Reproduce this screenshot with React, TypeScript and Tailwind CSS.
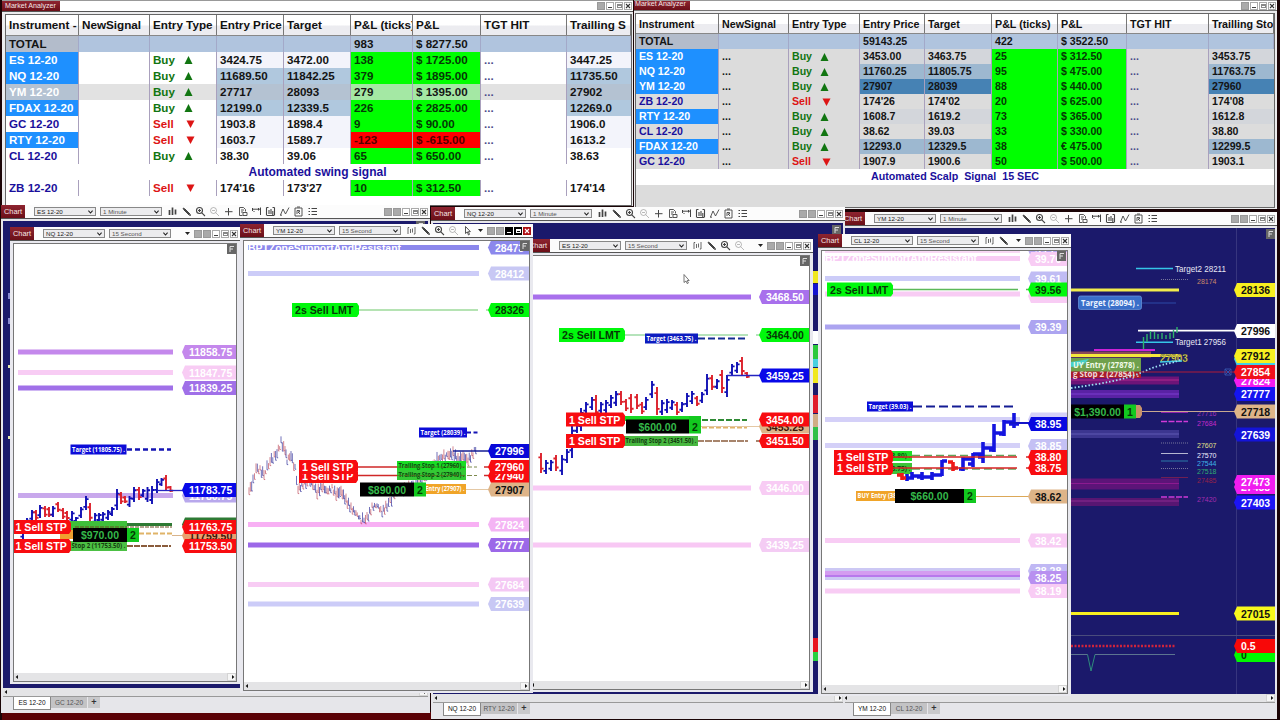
import type { ReactNode } from "react";
import clsx from "clsx";

type Row = {
  name: string;
  side?: "Buy" | "Sell";
  cells: [string, string, string, string, string];
  tone?: "plain" | "light" | "blue" | "deep";
  marked?: boolean;
  loss?: boolean;
  dimmed?: boolean;
};

const swingRows: Row[] = [
  { name: "ES 12-20", side: "Buy", cells: ["3424.75", "3472.00", "138", "$ 1725.00", "3447.25"], tone: "light", marked: true },
  { name: "NQ 12-20", side: "Buy", cells: ["11689.50", "11842.25", "379", "$ 1895.00", "11735.50"], tone: "blue", marked: true },
  { name: "YM 12-20", side: "Buy", cells: ["27717", "28093", "279", "$ 1395.00", "27902"], tone: "deep", dimmed: true },
  { name: "FDAX 12-20", side: "Buy", cells: ["12199.0", "12339.5", "226", "€ 2825.00", "12269.0"], tone: "blue", marked: true },
  { name: "GC 12-20", side: "Sell", cells: ["1903.8", "1898.4", "9", "$ 90.00", "1906.0"], tone: "light" },
  { name: "RTY 12-20", side: "Sell", cells: ["1603.7", "1589.7", "-123", "$ -615.00", "1613.2"], tone: "light", marked: true, loss: true },
  { name: "CL 12-20", side: "Buy", cells: ["38.30", "39.06", "65", "$ 650.00", "38.63"] },
];

const swingTail: Row[] = [
  { name: "ZB 12-20", side: "Sell", cells: ["174'16", "173'27", "10", "$ 312.50", "174'14"] },
];

const scalpRows: Row[] = [
  { name: "ES 12-20", side: "Buy", cells: ["3453.00", "3463.75", "25", "$ 312.50", "3453.75"], tone: "light", marked: true },
  { name: "NQ 12-20", side: "Buy", cells: ["11760.25", "11805.75", "95", "$ 475.00", "11763.75"], tone: "blue", marked: true },
  { name: "YM 12-20", side: "Buy", cells: ["27907", "28039", "88", "$ 440.00", "27960"], tone: "deep", marked: true },
  { name: "ZB 12-20", side: "Sell", cells: ["174'26", "174'02", "20", "$ 625.00", "174'08"] },
  { name: "RTY 12-20", side: "Buy", cells: ["1608.7", "1619.2", "73", "$ 365.00", "1612.8"], tone: "light", marked: true },
  { name: "CL 12-20", side: "Buy", cells: ["38.62", "39.03", "33", "$ 330.00", "38.80"] },
  { name: "FDAX 12-20", side: "Buy", cells: ["12293.0", "12329.5", "38", "€ 475.00", "12299.5"], tone: "blue", marked: true },
  { name: "GC 12-20", side: "Sell", cells: ["1907.9", "1900.6", "50", "$ 500.00", "1903.1"] },
];

const SWING_COLS = "grid grid-cols-[73px_71px_67px_67px_67px_62px_68px_86px_64px]";
const SCALP_COLS = "grid grid-cols-[83px_70px_71px_65px_67px_66px_69px_82px_65px]";

const swingTones = { plain: "bg-white", light: "bg-[#f3f4fb]", blue: "bg-[#b0c8de]", deep: "bg-[#b4c2d2]" };
const scalpTones = { plain: "bg-[#dcdcdc]", light: "bg-[#d3d6db]", blue: "bg-[#9db8d0]", deep: "bg-[#4682b4]" };

function AnalyzerRow({ row, scalp }: { row: Row; scalp?: boolean }) {
  const tone = (scalp ? scalpTones : swingTones)[row.tone ?? "plain"];
  const blank = row.dimmed ? "bg-[#e2e2e2]" : scalp ? "bg-[#dcdcdc]" : "bg-white";
  const pnl = row.loss ? "bg-[#ff0000] text-[#500]" : row.dimmed ? "bg-[#a4e8a4]" : "bg-[#00ff00] text-[#053805]";
  const cell = "border-r border-[#a9a0bd] pl-[3px] whitespace-nowrap overflow-hidden";
  return (
    <div className={clsx(scalp ? SCALP_COLS : SWING_COLS, scalp ? "h-[15px] leading-[15px]" : "h-4 leading-4")}>
      <div
        className={clsx(
          cell,
          row.dimmed ? "bg-[#b4c2d2] text-white" : row.marked ? "bg-[#1e90ff] text-white" : [blank, "text-[#1a0f9c]"],
        )}
      >
        {row.name}
      </div>
      <div className={clsx(cell, blank)}>{scalp ? "..." : ""}</div>
      <div className={clsx(cell, blank, "flex", row.side === "Buy" ? "text-[#117511]" : "text-[#dd1414]")}>
        <span className={scalp ? "w-[28px]" : "w-[31px]"}>{row.side}</span>
        <svg className={clsx("mt-[4px] h-[8px] w-[9px]", row.side === "Sell" && "ml-[2px]")} viewBox="0 0 9 8">
          <path d={row.side === "Buy" ? "M4.5 0 8.5 8H.5z" : "M4.5 8 8.5 .5H.5z"} fill="currentColor" />
        </svg>
      </div>
      <div className={clsx(cell, tone)}>{row.cells[0]}</div>
      <div className={clsx(cell, tone)}>{row.cells[1]}</div>
      <div className={clsx(cell, pnl)}>{row.cells[2]}</div>
      <div className={clsx(cell, pnl)}>{row.cells[3]}</div>
      <div className={clsx(cell, blank, "text-[#4a4a8a]")}>...</div>
      <div className={clsx("overflow-hidden pl-[3px] whitespace-nowrap", tone)}>{row.cells[4]}</div>
    </div>
  );
}

function HeaderRow({ labels, scalp }: { labels: string[]; scalp?: boolean }) {
  return (
    <div
      className={clsx(
        scalp ? SCALP_COLS : SWING_COLS,
        scalp ? "h-5 text-[10.7px] leading-[20px]" : "h-[21px] text-[11.7px] leading-[20px]",
        "border-b border-[#888] bg-linear-to-b from-white from-50% to-[#ececf0] to-55% text-[#111]",
      )}
    >
      {labels.map((l) => (
        <div key={l} className="overflow-hidden border-r border-[#777] pl-[3px] whitespace-nowrap">
          {l}
        </div>
      ))}
    </div>
  );
}

function TotalRow({ values, scalp }: { values: string[]; scalp?: boolean }) {
  return (
    <div className={clsx(scalp ? SCALP_COLS : SWING_COLS, scalp ? "h-[15px] leading-[15px]" : "h-4 leading-4", "bg-[#b0c4de]")}>
      {values.map((v, i) => (
        <div key={i} className={clsx("border-r border-[#a3a9c9] pl-[3px] font-bold whitespace-nowrap", i === 0 && "bg-[#b3bccb]")}>
          {v}
        </div>
      ))}
    </div>
  );
}

function WindowButtons({ active, short }: { active?: boolean; short?: boolean }) {
  const box = "h-[8px] w-[8px] border";
  return (
    <div className="flex shrink-0 items-center gap-px">
      <div className={clsx(box, "border-[#999] bg-[#aaa]")} />
      {!short && <div className={clsx(box, "border-[#999] bg-[#aaa]")} />}
      <div className={clsx(box, "flex items-end justify-center", active ? "border-black bg-black" : "border-[#aaa] bg-white")}>
        <div className={clsx("mb-px h-px w-1", active ? "bg-white" : "bg-[#444]")} />
      </div>
      <div className={clsx(box, "flex items-center justify-center", active ? "border-black bg-black" : "border-[#aaa] bg-white")}>
        <div className={clsx("h-1 w-[5px] border border-t-2", active ? "border-white" : "border-[#888]")} />
      </div>
      <svg className={clsx(box, active ? "border-[#a11] bg-[#b3121c] text-white" : "border-[#aaa] bg-white text-[#333]")} viewBox="0 0 6 6">
        <path d="M1 1l4 4M5 1 1 5" stroke="currentColor" strokeWidth="1.1" />
      </svg>
    </div>
  );
}

const iconPaths: Record<string, ReactNode> = {
  bars: <path d="M2.5 4v5M5.5 1.5v7.5M8.5 3.5v5" strokeWidth="1.7" />,
  range: <path d="M2 2.500v6.500M4.500 4v4M6.500 3.500v4M9 2v7M2 2.500h1.200M7.800 9H9" strokeWidth=".8" />,
  pencil: <path d="M2 2l1 2 5 5 1.5.5L9 8 4 3zM3 3l5.5 5.5" strokeWidth="1" />,
  zoomIn: <path d="M4.5 1.5a3 3 0 100 6 3 3 0 000-6zM3 4.5h3M4.5 3v3M6.8 6.8 10 10" strokeWidth="1.1" />,
  zoomOut: <path d="M4.5 1.5a3 3 0 100 6 3 3 0 000-6zM3 4.5h3M6.8 6.8 10 10" strokeWidth=".9" opacity=".4" />,
  plus: <path d="M5.5 2v7.5M2 5.7h7.5" strokeWidth="1" />,
  page: <path d="M2.5 1.5h4l2 2v2M2.5 1.5v8h3M4 4h3M4 6h2M6 6.5h4v3H6z" strokeWidth=".9" />,
  trader: <path d="M1.5 2v3M1.5 3.2h8M9.5 1.5V9M7.5 2v2.5M3 5v1" strokeWidth="1" />,
  candles: <path d="M1.5 1.5v8M9.5 1.5v8M1.5 1.5h2M7.5 1.5h2M4 4v4M6 3v5M7.8 5v4M2 9.5h7" strokeWidth="1.1" />,
  zigzag: <path d="M1.5 9 4 3l2.5 5L10 1.5M1 9.2h2" strokeWidth=".9" />,
  clip: <path d="M2 2h7v8H2zM4 1h3M4 8V4.5h2.5V6H5l2 2" strokeWidth=".9" />,
  list: <path d="M1.5 2.5h1.5M1.5 5.5h1.5M1.5 8.5h1.5M4.5 2.5H10M4.5 5.5H10M4.5 8.5H10" strokeWidth="1.1" />,
  cursor: <path d="M3.5 1.5v7l1.8-1.6L6.5 10l1-.6L6.4 6.6h2z" strokeWidth=".9" />,
};

function ToolIcon({ name }: { name: string }) {
  return (
    <svg className="mx-[1.5px] h-[11px] w-[11px] shrink-0 text-[#444]" viewBox="0 0 11 11" fill="none" stroke="currentColor">
      {iconPaths[name]}
    </svg>
  );
}

function Combo({ value, muted }: { value: string; muted?: boolean }) {
  return (
    <div className="flex h-[9px] w-[62px] shrink-0 items-center justify-between border border-[#888] bg-[#ececee] px-[2px]">
      <span className={clsx("text-[6.2px] leading-[8px]", muted ? "text-[#555]" : "text-[#222]")}>{value}</span>
      <svg className="h-[4px] w-[5px]" viewBox="0 0 5 4">
        <path d="M.4.7 2.5 3 4.6.7" fill="none" stroke="#222" strokeWidth="1.1" />
      </svg>
    </div>
  );
}

function TitleBar({ symbol, period, icons, menu, active }: { symbol: string; period: string; icons: string[]; menu?: boolean; active?: boolean }) {
  return (
    <div className="flex h-[14px] shrink-0 items-center border-b border-[#555] bg-[#fcfcfc]">
      <div className="h-[13px] w-6 shrink-0 bg-linear-to-b from-[#8e2430] to-[#6b0f18] text-center text-[7.4px] leading-[13px] text-[#f5e6e6]">
        Chart
      </div>
      <div className="ml-[9px] flex gap-1">
        <Combo value={symbol} />
        <Combo value={period} muted />
      </div>
      <div className="ml-[3px] flex">
        {icons.map((name) => (
          <ToolIcon key={name} name={name} />
        ))}
      </div>
      <div className="mr-[2px] ml-auto flex items-center gap-1">
        {menu && (
          <svg className="h-[3px] w-[5px]" viewBox="0 0 5 3">
            <path d="M0 0h5L2.5 3z" fill="#222" />
          </svg>
        )}
        <WindowButtons active={active} />
      </div>
    </div>
  );
}

function ScrollBar() {
  return (
    <div className="flex h-2 shrink-0 items-center justify-between bg-[#e4e4e6] pl-px">
      <svg className="h-1 w-1" viewBox="0 0 4 4">
        <path d="M3 0v4L.6 2z" fill="#111" />
      </svg>
      <div className="flex h-full w-[9px] items-center justify-center border border-[#d4d4d4] bg-[#f6f6f6]">
        <svg className="ml-0.5 h-1 w-1" viewBox="0 0 4 4">
          <path d="M1 0v4l2.4-2z" fill="#111" />
        </svg>
      </div>
    </div>
  );
}

type View = [number, number, number, number];

function Canvas({ view, children }: { view: View; children?: ReactNode }) {
  return (
    <svg
      className="block shrink-0 [font-family:'Liberation_Sans',Arial,sans-serif]"
      width={view[2]}
      height={view[3]}
      viewBox={view.join(" ")}
    >
      {children}
    </svg>
  );
}

const allIcons = ["bars", "pencil", "zoomIn", "zoomOut", "plus", "page", "trader", "candles", "zigzag", "clip", "list"];

function WorkspaceWindow({ place, symbol, tabs, view, children }: { place: string; symbol: string; tabs: [string, string]; view: View; children?: ReactNode }) {
  return (
    <section className={clsx("absolute flex flex-col overflow-hidden bg-[#e6e6ea]", place)}>
      <TitleBar symbol={symbol} period="1 Minute" icons={allIcons} />
      <div className="mx-[2px] mt-[2px] flex min-h-0 flex-1 overflow-hidden bg-[#1b196b]">
        <Canvas view={view}>{children}</Canvas>
      </div>
      <div className="mx-[2px] border-b border-[#999]">
        <ScrollBar />
      </div>
      <div className="flex h-4 shrink-0 pl-3 text-[6.5px] leading-[11px]">
        <div className="h-[13px] w-[38px] border border-t-0 border-[#888] bg-white text-center text-[#111]">{tabs[0]}</div>
        <div className="h-[11px] w-[36px] bg-[#c3c3c5] text-center text-[#555]">{tabs[1]}</div>
        <div className="ml-px h-[11px] w-3 bg-[#c9c9cb] text-center text-[9px] font-bold text-[#333]">+</div>
      </div>
    </section>
  );
}

function ChartWindow({ place, symbol, icons, view, active, children }: { place: string; symbol: string; icons: string[]; view: View; active?: boolean; children?: ReactNode }) {
  return (
    <section className={clsx("absolute flex flex-col overflow-hidden bg-[#e9e9ef]", place)}>
      <TitleBar symbol={symbol} period="15 Second" icons={icons} menu active={active} />
      <div className="mx-[3px] mt-[2px] mb-[2px] flex min-h-0 flex-1 flex-col overflow-hidden border border-[#777] bg-white">
        <Canvas view={view}>{children}</Canvas>
        <ScrollBar />
      </div>
    </section>
  );
}

function PriceTag({ x, y, w, fill, text, fg = "#fff" }: { x: number; y: number; w: number; fill: string; text: string; fg?: string }) {
  return (
    <g>
      <path d={`M${x} ${y}l3-7H${x + w}v14H${x + 3}z`} fill={fill} />
      <text x={x + 7} y={y + 4} fontSize="10.5" fontWeight="bold" fill={fg}>
        {text}
      </text>
    </g>
  );
}

function OrderTag({ x, y, w, fill, text, fg = "#fff" }: { x: number; y: number; w: number; fill: string; text: string; fg?: string }) {
  return (
    <g>
      <path d={`M${x} ${y - 7}H${x + w - 2}l2 3v8l-2 3H${x}z`} fill={fill} />
      <text x={x + (w < 58 ? 1.5 : 3)} y={y + 4} fontSize="10.6" fontWeight="bold" fill={fg}>
        {text}
      </text>
    </g>
  );
}

function Note({ x, y, w, h = 10, fill, text, fg = "#fff" }: { x: number; y: number; w: number; h?: number; fill: string; text: string; fg?: string }) {
  return (
    <g>
      <rect x={x} y={y} width={w} height={h} fill={fill} />
      <text x={x + 1.5} y={y + h / 2 + 2.4} fontSize="6.6" fontWeight="bold" fontFamily="'Open Sans', 'Noto Sans', sans-serif" fill={fg} textLength={w - 3} lengthAdjust="spacingAndGlyphs">
        {text}
      </text>
    </g>
  );
}

function Position({ x, y, w, text, qty }: { x: number; y: number; w: number; text: string; qty: string }) {
  return (
    <g fontSize="10.5" fontWeight="bold" textAnchor="middle">
      <rect x={x} y={y - 7} width={w} height="14" fill="#000" />
      <rect x={x + w} y={y - 7} width="12" height="14" fill="#12c91f" />
      <text x={x + w / 2} y={y + 4} fill="#35b84a">
        {text}
      </text>
      <text x={x + w + 6} y={y + 4} fill="#053805">
        {qty}
      </text>
    </g>
  );
}

function Zone({ x, y, w, fill, h = 5 }: { x: number; y: number; w: number; fill: string; h?: number }) {
  return <rect x={x} y={y - h / 2} width={w} height={h} fill={fill} />;
}

function PanelFlag({ x, y }: { x: number; y: number }) {
  return (
    <g>
      <rect x={x} y={y} width="9" height="10" fill="#666" />
      <path d={`M${x + 3} ${y + 8}V${y + 2.5}h4M${x + 3} ${y + 5}h3`} stroke="#ddd" strokeWidth="1" fill="none" />
    </g>
  );
}

// x, high, low, direction
type Bar = [number, number, number, "b" | "r"];

function Bars({ data, width = 1.9, tick = 2.6 }: { data: Bar[]; width?: number; tick?: number }) {
  return (
    <>
      {data.map(([x, hi, lo, dir]) => {
        const span = (lo - hi) * 0.22;
        const open = dir === "b" ? lo - span : hi + span;
        const close = dir === "b" ? hi + span : lo - span;
        return (
          <path
            key={x}
            d={`M${x} ${hi}V${lo}M${x - tick} ${open}H${x}M${x} ${close}h${tick}`}
            stroke={dir === "b" ? "#1010b4" : "#dc202a"}
            strokeWidth={width}
            fill="none"
          />
        );
      })}
    </>
  );
}

const nqBars: Bar[] = [
  [23, 528, 539, "b"], [27, 518, 530, "b"], [32, 510, 521, "b"], [36, 510, 520, "r"], [40, 505, 518, "b"], [45, 506, 517, "r"],
  [49, 507, 517, "r"], [53, 506, 517, "b"], [58, 502, 512, "r"], [63, 508, 519, "r"], [67, 511, 520, "r"], [72, 511, 522, "b"],
  [76, 517, 522, "b"], [81, 507, 518, "b"], [86, 496, 510, "b"], [90, 503, 522, "r"], [95, 513, 524, "b"], [99, 513, 522, "b"],
  [103, 512, 522, "b"], [108, 510, 520, "b"], [112, 507, 516, "b"], [117, 489, 510, "b"], [121, 492, 504, "r"], [125, 496, 503, "r"],
  [129.5, 496, 507, "b"], [134, 487, 502, "b"], [139, 487, 500, "r"], [143, 489, 497, "b"], [147.5, 487, 502, "b"], [152, 486, 504, "b"],
  [157, 479, 493, "b"], [161.5, 478, 486, "b"], [166, 475, 491, "r"], [170.5, 486, 492, "r"],
];

const esBars: Bar[] = [
  [541, 453, 473, "r"], [546, 460, 474, "b"], [551, 460, 471, "b"], [556, 455, 471, "r"], [562, 455, 475, "b"], [567, 449, 463, "b"],
  [572, 423, 458, "b"], [577, 423, 433, "b"], [581, 408, 431, "b"], [586, 402, 413, "b"], [592, 397, 410, "b"], [596, 395, 417, "r"],
  [601, 402, 413, "b"], [606, 400, 413, "b"], [611, 395, 408, "b"], [616, 391, 406, "b"], [621, 391, 405, "r"], [626, 399, 411, "r"],
  [631, 394, 413, "r"], [637, 394, 409, "r"], [642, 402, 414, "r"], [646, 397, 410, "b"], [652, 381, 398, "b"], [657, 387, 415, "r"],
  [662, 400, 415, "b"], [667, 399, 413, "b"], [672, 400, 410, "b"], [677, 402, 415, "r"], [682, 402, 412, "b"], [687, 393, 407, "b"],
  [692, 391, 404, "b"], [697, 396, 406, "r"], [702, 392, 403, "b"], [707, 374, 395, "b"], [712, 375, 390, "r"], [717, 379, 389, "b"],
  [722, 370, 393, "r"], [727, 375, 397, "b"], [732, 364, 375, "b"], [737, 362, 373, "b"], [742, 357, 375, "r"], [747, 372, 378, "r"],
];

const ymTrail: [number, number][] = [
  [249, 491], [253, 481], [256, 468], [260, 470], [264, 474], [270, 461], [277, 453], [281, 442], [285, 450], [287, 460], [291, 455],
  [295, 469], [298, 489], [303, 484], [310, 480], [317, 492], [322, 486], [327, 491], [332, 488], [336, 494], [341, 491], [346, 500],
  [351, 508], [356, 513], [361, 520], [367, 518], [372, 507], [377, 505], [382, 512], [387, 505], [393, 497], [398, 492], [403, 490],
  [413, 485], [422, 479], [430, 470], [437, 459], [448, 455], [453, 453], [458, 460], [463, 456], [468, 460], [473, 453], [477, 447],
];

function YmBars() {
  const out: ReactNode[] = [];
  for (let i = 0; i < ymTrail.length - 1; i++) {
    const [x0, y0] = ymTrail[i];
    const [x1, y1] = ymTrail[i + 1];
    const n = Math.max(2, Math.round((x1 - x0) / 1.4));
    for (let k = 0; k < n; k++) {
      const t = k / n;
      const x = x0 + (x1 - x0) * t;
      const y = y0 + (y1 - y0) * t + Math.sin(x * 2.7) * 2.4;
      const reach = 1.6 + Math.abs(Math.sin(x * 5.1)) * 3.2;
      out.push(
        <path
          key={`${i}-${k}`}
          d={`M${x} ${y - reach}V${y + reach}h1.2`}
          fill="none"
          stroke={Math.sin(x * 1.3) > -0.1 ? "#34349c" : "#c05060"}
          strokeWidth=".7"
        />,
      );
    }
  }
  return <>{out}</>;
}

const ymLevels: [string, number, string][] = [
  ["28174", 284, "#c98a6a"], ["27716", 416, "#a032b8"], ["27684", 425.5, "#c02ac8"], ["27607", 447.5, "#e3e08a"], ["27570", 458, "#f0f0ff"],
  ["27544", 465.5, "#3fb4e8"], ["27518", 473.5, "#2fae72"], ["27485", 482.5, "#96224a"], ["27420", 501.5, "#a42cae"],
];

function YmMinuteChart() {
  return (
    <>
      <path d="M1236.5 228V695" stroke="#37357e" />
      <path d="M1071 635.5H1276" stroke="#4a4c7c" />
      <PanelFlag x={1266} y={229} />
      <path d="M1136 268.5h37M1136 342.3h37" stroke="#35c6e8" strokeWidth="1.6" />
      <g fontSize="8.2" fill="#e8e8f4">
        <text x="1175" y="271.5" textLength="51" lengthAdjust="spacingAndGlyphs">Target2 28211</text>
        <text x="1175" y="345" textLength="51" lengthAdjust="spacingAndGlyphs">Target1 27956</text>
      </g>
      {ymLevels.map(([t, y, c]) => (
        <text key={t} x="1197" y={y} fontSize="7" fill={c}>
          {t}
        </text>
      ))}
      <path d="M1161 279.5h27M1161 443h27M1161 468.5h27" stroke="#8e8ea8" strokeWidth=".8" strokeDasharray="1 1" />
      <path d="M1161 453.5h27" stroke="#c8c8dc" strokeWidth=".9" />
      <path d="M1161 461h27" stroke="#2f86b0" strokeWidth=".9" />
      <path d="M1161 477.5h27" stroke="#7a2050" strokeWidth=".9" />
      <path d="M1142 303h34" stroke="#2c4aa8" />
      <Zone x={1071} y={290} w={108} h={3} fill="#f2ec4c" />
      <rect x="1078.5" y="296" width="63" height="13.5" rx="2" fill="#3a6fc9" stroke="#6d9be0" strokeWidth=".7" />
      <text x="1081" y="305.5" fontSize="8" fontWeight="bold" fontFamily="'Open Sans', 'Noto Sans', sans-serif" fill="#eef4ff" textLength="58" lengthAdjust="spacingAndGlyphs">
        Target (28094) .
      </text>

      <Zone x={1071} y={380.5} w={108} h={8} fill="#6d1478" />
      <path d="M1071 380h108" stroke="#b0288c" />
      <Zone x={1071} y={394} w={108} h={8} fill="#5a22a4" />
      <path d="M1071 394h108" stroke="#7a3cd0" />
      <Zone x={1071} y={434} w={108} h={8} fill="#3c3690" />
      <path d="M1071 434h108" stroke="#5e58b4" />
      <Zone x={1071} y={484} w={108} h={11} fill="#5c1478" />
      <path d="M1071 483.5h108" stroke="#8c1a90" />
      <Zone x={1071} y={502} w={108} h={8} fill="#571672" />
      <path d="M1071 501h108" stroke="#8c2a90" />

      <path d="M1071 351.5h80v6h-80z" fill="#8a4a58" />
      <Zone x={1094} y={350} w={61} h={2} fill="#cc22d8" />
      <path d="M1138 330.7h98" stroke="#fff" strokeWidth="1.8" />
      <path
        d="M1143.5 337v12M1147 334v8M1150.5 331v8M1154.5 332v7M1158 334v5M1162 333v6M1166 335v4M1170 333v6M1173.5 330v8M1177 327v6"
        stroke="#2fb46c"
        strokeWidth="1.4"
      />
      <rect x="1071" y="371" width="70" height="7" fill="#a81c2c" />
      <text x="1073" y="377" fontSize="8" fontWeight="bold" fontFamily="'Open Sans', 'Noto Sans', sans-serif" fill="#f0dada" textLength="66" lengthAdjust="spacingAndGlyphs">
        g Stop 2 (27854) .
      </text>
      <rect x="1071" y="358" width="70" height="13.5" fill="#6fa04c" />
      <path d="M1071 362l18-3-6 6-12 2z" fill="#48d0c8" />
      <text x="1073" y="368" fontSize="8" fontWeight="bold" fontFamily="'Open Sans', 'Noto Sans', sans-serif" fill="#f2fbe8" textLength="66" lengthAdjust="spacingAndGlyphs">
        UY Entry (27878) .
      </text>
      <Zone x={1071} y={355.5} w={110} h={3} fill="#f4e83c" />
      <text x="1160" y="361.5" fontSize="10" fontWeight="bold" fill="#e8e04a" stroke="#182040" strokeWidth=".3">
        27903
      </text>
      <path d="M1160 362l22-1" stroke="#3cc8e8" strokeWidth="1.6" />
      <path d="M1071 388C1100 384 1125 380 1145 371S1170 365 1182 359" fill="none" stroke="#9fe0f4" strokeWidth="1.8" strokeDasharray="1.5 2" />
      <path d="M1141 372h95" stroke="#b01c38" strokeWidth="1.2" />
      <path d="M1225 369h6v6h-6zM1225 369l6 6M1231 369l-6 6" fill="none" stroke="#3450a8" />
      <path d="M1161 412h27" stroke="#c02ac8" strokeWidth="1.4" />
      <path d="M1161 421.5h27M1161 497h27" stroke="#d03ad8" strokeWidth="1.6" strokeDasharray="6 1.5" />
      <Position x={1071} y={411.5} w={53} text="$1,390.00" qty="1" />
      <path d="M1136 405h4l2 3v7l-2 3h-4z" fill="#c8926a" />
      <path d="M1142 411.5h94" stroke="#c8a890" strokeWidth="1.2" />
      <Zone x={1071} y={613.5} w={108} h={3} fill="#f8f020" />
      <path d="M1071 646h105" stroke="#d0243c" strokeWidth="2.5" strokeDasharray="2 1.5" />
      <path d="M1071 654.5h16.5M1095 654.5h80" stroke="#5c7490" />
      <path d="M1087.5 654.5 1091 671l4-16.5" stroke="#2e8c7c" fill="none" />

      <PriceTag x={1234} y={290} w={42} fill="#f8f020" fg="#111" text="28136" />
      <PriceTag x={1234} y={331} w={42} fill="#fff" fg="#111" text="27996" />
      <PriceTag x={1234} y={359} w={42} fill="#42d0e8" text="" />
      <PriceTag x={1234} y={356} w={42} fill="#f8f020" fg="#111" text="27912" />
      <PriceTag x={1234} y={380.5} w={42} fill="#f41cf0" text="27824" />
      <PriceTag x={1234} y={372} w={42} fill="#f0101c" text="27854" />
      <PriceTag x={1234} y={394} w={42} fill="#1414f0" text="27777" />
      <PriceTag x={1234} y={411.5} w={42} fill="#deb488" fg="#111" text="27718" />
      <PriceTag x={1234} y={434.5} w={42} fill="#1414d8" text="27639" />
      <PriceTag x={1234} y={487} w={42} fill="#f01cf0" text="27458" />
      <PriceTag x={1234} y={482} w={42} fill="#f01cf0" text="27473" />
      <PriceTag x={1234} y={502.5} w={42} fill="#1c14f4" text="27403" />
      <PriceTag x={1234} y={613.5} w={42} fill="#f8f81c" fg="#111" text="27015" />
      <PriceTag x={1234} y={655} w={42} fill="#00f800" fg="#053805" text="0" />
      <PriceTag x={1234} y={646} w={42} fill="#f80808" text="0.5" />
    </>
  );
}

// narrow strip of the price axis still showing at the right of the middle window
const axisStrip: [number, number, string][] = [
  [271, 12, "#f0e820"], [284, 11, "#1414d0"], [331, 13, "#ffffff"], [345, 14, "#2cc83c"], [359, 8, "#48d0e0"], [368, 15, "#f0e820"],
  [395, 18, "#e01c2c"], [414, 13, "#d0ac84"], [427, 13, "#30c048"], [638, 14, "#e81420"], [652, 9, "#28d040"],
];

export default function App() {
  return (
    <main className="relative h-[720px] w-[1280px] overflow-hidden bg-[#1a0406] [font-family:'Liberation_Sans',Arial,sans-serif]">
      <div className="absolute bottom-0 left-[2px] h-[8px] w-[429px] bg-[#5a0206]" />

      <section className="absolute top-0 left-[2px] flex h-[206px] w-[631px] flex-col border-t border-[#999] bg-[#ececee]">
        <div className="flex h-[11px] items-center justify-between border-b border-[#555] bg-white">
          <div className="h-[10px] w-[58px] bg-linear-to-b from-[#8e2430] to-[#6b0f18] pl-[3px] text-[7.1px] leading-[10px] text-[#f5e6e6]">
            Market Analyzer
          </div>
          <div className="mr-px">
            <WindowButtons short />
          </div>
        </div>
        <div className="mt-[2px] mr-px ml-[3px] flex-1 overflow-hidden border border-[#666] bg-white text-[11.6px] font-bold text-[#141414]">
          <HeaderRow labels={["Instrument -", "NewSignal", "Entry Type", "Entry Price", "Target", "P&L (ticks)", "P&L", "TGT HIT", "Trailling S"]} />
          <TotalRow values={["TOTAL", "", "", "", "", "983", "$ 8277.50", "", ""]} />
          {swingRows.map((r) => (
            <AnalyzerRow key={r.name} row={r} />
          ))}
          <p className="h-4 pr-0.5 text-center text-[12px] leading-4 text-[#1a0f9c]">Automated swing signal</p>
          {swingTail.map((r) => (
            <AnalyzerRow key={r.name} row={r} />
          ))}
        </div>
      </section>

      <section className="absolute top-0 left-[634px] flex h-[209px] w-[643px] flex-col border-t border-[#999] bg-[#ececee]">
        <div className="flex h-[10px] items-center justify-between border-b border-[#777] bg-white">
          <div className="h-[9px] w-[56px] bg-linear-to-b from-[#8e2430] to-[#6b0f18] pl-px text-[7.1px] leading-[7px] text-[#f5e6e6]">
            Market Analyzer
          </div>
          <div className="mr-px">
            <WindowButtons short />
          </div>
        </div>
        <div className="mt-[2px] mr-[2px] mb-px ml-px flex-1 overflow-hidden border border-[#666] bg-[#dcdcdc] text-[10.6px] font-bold text-[#141414]">
          <HeaderRow scalp labels={["Instrument", "NewSignal", "Entry Type", "Entry Price", "Target", "P&L (ticks)", "P&L", "TGT HIT", "Trailling Sto"]} />
          <TotalRow scalp values={["TOTAL", "", "", "59143.25", "", "422", "$ 3522.50", "", ""]} />
          {scalpRows.map((r) => (
            <AnalyzerRow key={r.name} row={r} scalp />
          ))}
          <p className="h-4 bg-white text-center text-[10.7px] leading-[15px] whitespace-pre text-[#1a0f9c]">{"Automated Scalp  Signal  15 SEC"}</p>
        </div>
      </section>

      <WorkspaceWindow place="left-px top-[205px] w-[429px] h-[508px]" symbol="ES 12-20" tabs={["ES 12-20", "GC 12-20"]} view={[3, 221, 425, 468]}>
        <PanelFlag x={416} y={221} />
        <path d="M8 293h2v6h-2zM8 318h2v6h-2z" fill="#8a8ad0" />
        <path d="M8 365h2v3h-2zM8 436h2v3h-2z" fill="#e8e8b0" />
      </WorkspaceWindow>

      <WorkspaceWindow place="left-[841px] top-[212px] w-[436px] h-[507px]" symbol="YM 12-20" tabs={["YM 12-20", "CL 12-20"]} view={[843, 228, 432, 467]}>
        <YmMinuteChart />
      </WorkspaceWindow>

      <WorkspaceWindow place="left-[431px] top-[207px] w-[414px] h-[512px]" symbol="NQ 12-20" tabs={["NQ 12-20", "RTY 12-20"]} view={[433, 223, 410, 472]}>
        <PanelFlag x={832} y={225} />
        {axisStrip.map(([y, h, c]) => (
          <rect key={y} x="813" y={y} width="8" height={h} fill={c} />
        ))}
      </WorkspaceWindow>

      <ChartWindow place="left-[10px] top-[227px] w-[230px] h-[457px]" symbol="NQ 12-20" icons={[]} view={[14, 244, 222, 429]}>
        <PanelFlag x={227} y={244} />
        <Zone x={18} y={352} w={155} fill="#c488ec" />
        <Zone x={18} y={372.5} w={155} fill="#f8ccf4" />
        <Zone x={18} y={388} w={155} fill="#a070e8" />
        <Zone x={18} y={495.5} w={155} fill="#c8a8ec" />
        <Note x={70.5} y={444.5} w={56} fill="#0c0cd8" text="Target (11805.75) ." />
        <path d="M127 449.5h44" stroke="#1414b4" strokeWidth="2.4" strokeDasharray="5 3" />
        <Bars data={nqBars} />
        <path d="M157 490.5h26" stroke="#2424c0" strokeWidth="1.3" />
        <rect x="70" y="521" width="57" height="9" fill="#3fbf3a" />
        <path d="M127 524.5h45" stroke="#2e7a34" strokeWidth="3" />
        <path d="M75 527h97" stroke="#6a4a20" strokeDasharray="4 1" />
        <rect x="60" y="530" width="16" height="9" fill="#f0a030" />
        <path d="M139 533.5h33" stroke="#e0b468" strokeWidth="2" strokeDasharray="5 2" />
        <path d="M172 535.5h12" stroke="#d8b48c" />
        <Note x={70} y={541} w={57} fill="#4cc044" fg="#173f10" text="Stop 2 (11753.50) ." />
        <path d="M127 546h44" stroke="#8a5c3c" strokeWidth="2" strokeDasharray="6 1" />
        <OrderTag x={14} y={527} w={57} fill="#f80c10" text="1 Sell STP" />
        <OrderTag x={14} y={546} w={57} fill="#f80c10" text="1 Sell STP" />
        <Position x={73} y={535} w={54} text="$970.00" qty="2" />
        <PriceTag x={182} y={352} w={55} fill="#c488ec" text="11858.75" />
        <PriceTag x={182} y={372.5} w={55} fill="#f8ccf4" text="11847.75" />
        <PriceTag x={182} y={388} w={55} fill="#a070e8" text="11839.25" />
        <PriceTag x={182} y={495.5} w={55} fill="#b8a8ec" text="11780.75" />
        <PriceTag x={182} y={490} w={55} fill="#0808e8" text="11783.75" />
        <PriceTag x={182} y={524.5} w={55} fill="#2e7a34" text="" />
        <PriceTag x={182} y={535.5} w={55} fill="#e8a070" fg="#3c1408" text="11759.50" />
        <PriceTag x={182} y={527} w={55} fill="#f80c10" text="11763.75" />
        <PriceTag x={182} y={546} w={55} fill="#f80c10" text="11753.50" />
      </ChartWindow>

      <ChartWindow place="left-[526px] top-[239px] w-[287px] h-[453px]" symbol="ES 12-20" icons={["range", "pencil", "zoomIn", "zoomOut"]} view={[530, 256, 279, 425]}>
        <PanelFlag x={800} y={256} />
        <Zone x={530} y={297} w={221} fill="#a870ec" />
        <Zone x={530} y={488} w={221} fill="#f8c8f4" />
        <Zone x={530} y={545} w={221} fill="#f8c8f4" />
        <path d="M624 335h124M756 335h6" stroke="#6cc878" strokeWidth="1.2" />
        <OrderTag x={559} y={335} w={66} fill="#00f80c" fg="#053805" text="2s Sell LMT" />
        <Note x={645} y={333.5} w={53} fill="#0c1cc0" text="Target (3463.75) ." />
        <path d="M698 338.5h49" stroke="#142c94" strokeWidth="2.2" strokeDasharray="7 3" />
        <Bars data={esBars} />
        <path d="M727 375.5h33" stroke="#2424c0" strokeWidth="1.3" />
        <path d="M702 420h45" stroke="#2e8a34" strokeWidth="2.2" strokeDasharray="6 2" />
        <path d="M702 427.5h45" stroke="#e0b468" strokeWidth="2" strokeDasharray="5 2" />
        <path d="M698 426.5h64" stroke="#e4c8a4" />
        <path d="M697 441h51M756 441h6" stroke="#8a5c3c" strokeWidth="1.6" strokeDasharray="7 1" />
        <rect x="624" y="416" width="76" height="5" fill="#18d824" />
        <rect x="689" y="416" width="12" height="17" fill="#12c91f" />
        <Note x={624} y={436} w={74} fill="#48b840" fg="#123c10" text="Trailing Stop 2 (3451.50) ." />
        <OrderTag x={566} y={419.5} w={59} fill="#f80c10" text="1 Sell STP" />
        <OrderTag x={566} y={441} w={59} fill="#f80c10" text="1 Sell STP" />
        <Position x={626} y={426.5} w={63} text="$600.00" qty="2" />
        <PriceTag x={759} y={297} w={50} fill="#a870ec" text="3468.50" />
        <PriceTag x={759} y={335} w={50} fill="#00f80c" fg="#053805" text="3464.00" />
        <PriceTag x={759} y={375.5} w={50} fill="#0808e8" text="3459.25" />
        <PriceTag x={759} y={426.5} w={50} fill="#deb488" fg="#3c1408" text="3453.25" />
        <PriceTag x={759} y={419.5} w={50} fill="#f80c10" text="3454.00" />
        <PriceTag x={759} y={441} w={50} fill="#f80c10" text="3451.50" />
        <PriceTag x={759} y={488} w={50} fill="#f8ccf4" text="3446.00" />
        <PriceTag x={759} y={545} w={50} fill="#f4ccf4" text="3439.25" />
        <path d="M684 274.5v8l2-1.5 1.2 2.6 1.2-.6-1.2-2.5h2z" fill="#fff" stroke="#555" strokeWidth=".8" />
      </ChartWindow>

      <ChartWindow place="left-[240px] top-[224px] w-[293px] h-[469px]" symbol="YM 12-20" icons={["range", "pencil", "zoomIn", "zoomOut", "cursor"]} active view={[244, 241, 285, 441]}>
        <Zone x={248} y={247.5} w={231} fill="#8c88ec" />
        <text x="248" y="252" fontSize="10.5" fontWeight="bold" fill="#fff" textLength="153" lengthAdjust="spacingAndGlyphs">
          BPTZoneSupportAndResistant
        </text>
        <Zone x={248} y={273.5} w={231} fill="#ccccf8" />
        <Zone x={248} y={524.5} w={231} fill="#f8b0f4" />
        <Zone x={248} y={545} w={231} fill="#9c68e8" />
        <Zone x={248} y={584.5} w={231} fill="#f8ccf4" />
        <Zone x={248} y={604} w={231} fill="#ccccf8" />
        <path d="M358 310h120M486 310h4" stroke="#6cc868" strokeWidth="1.2" />
        <OrderTag x={292} y={310} w={67} fill="#00f80c" fg="#053805" text="2s Sell LMT" />
        <Note x={419} y={427.5} w={48} fill="#0c0cd8" text="Target (28039) ." />
        <path d="M467 432.5h11" stroke="#1414b4" strokeWidth="2" strokeDasharray="4 2.5" />
        <YmBars />
        <path d="M453 451h37" stroke="#141c94" strokeWidth="1.4" />
        <path d="M357 467h40M357 475.5h40M484 467h5M484 475.5h5" stroke="#d02828" strokeWidth="1.3" />
        <Note x={397} y={461} w={69} fill="#18dc24" fg="#0c4c10" text="Trailing Stop 1 (27960) ." />
        <Note x={397} y={470} w={69} fill="#34c834" fg="#0c4c10" text="Trailing Stop 2 (27940) ." />
        <path d="M397 467h80M397 475.5h80" stroke="#5c6c20" strokeWidth=".8" strokeDasharray="5 2" />
        <Note x={424} y={484} w={42} fill="#f0a428" text="Entry (27907) ." />
        <path d="M466 489.5h24" stroke="#e4c8a4" />
        <OrderTag x={299} y={476} w={59} fill="#f80c10" text="1 Sell STP" />
        <OrderTag x={299} y={467} w={59} fill="#f80c10" text="1 Sell STP" />
        <Position x={360} y={489.5} w={54} text="$890.00" qty="2" />
        <PriceTag x={488} y={247.5} w={42} fill="#8c88ec" text="28473" />
        <PriceTag x={488} y={273.5} w={42} fill="#c8c8f4" text="28412" />
        <PriceTag x={488} y={310} w={42} fill="#00f80c" fg="#053805" text="28326" />
        <PriceTag x={488} y={451} w={42} fill="#0808d8" text="27996" />
        <PriceTag x={488} y={476} w={42} fill="#f80c10" text="27940" />
        <PriceTag x={488} y={467} w={42} fill="#f80c10" text="27960" />
        <PriceTag x={488} y={489.5} w={42} fill="#deb488" fg="#111" text="27907" />
        <PriceTag x={488} y={524.5} w={42} fill="#f4b4f4" text="27824" />
        <PriceTag x={488} y={545} w={42} fill="#9c68e8" text="27777" />
        <PriceTag x={488} y={584.5} w={42} fill="#f4c8f4" text="27684" />
        <PriceTag x={488} y={604} w={42} fill="#c8c8f4" text="27639" />
        <PanelFlag x={520} y={241} />
      </ChartWindow>

      <ChartWindow place="left-[818px] top-[234px] w-[253px] h-[462px]" symbol="CL 12-20" icons={["range", "pencil"]} view={[822, 251, 245, 434]}>
        <Zone x={825} y={252} w={195} h={2} fill="#f8d8f4" />
        <Zone x={825} y={258.5} w={195} fill="#f8ccf4" />
        <text x="825" y="262" fontSize="10.5" fontWeight="bold" fill="#fff" textLength="152" lengthAdjust="spacingAndGlyphs">
          BPTZoneSupportAndResistant
        </text>
        <Zone x={825} y={278.5} w={195} fill="#ccccf8" />
        <Zone x={825} y={294} w={195} fill="#f8ccf4" />
        <Zone x={825} y={327} w={195} fill="#aca4f0" />
        <Zone x={825} y={419.5} w={195} fill="#d4d0f8" />
        <Zone x={825} y={445.5} w={195} fill="#d4d0f8" />
        <Zone x={825} y={540.5} w={195} fill="#f8ccf4" />
        <Zone x={825} y={574} w={195} h={12} fill="#ccc8f4" />
        <Zone x={825} y={574} w={195} h={6} fill="#d49cf0" />
        <Zone x={825} y={576} w={195} h={2} fill="#b878ec" />
        <Zone x={825} y={591} w={195} fill="#f8ccf4" />
        <path d="M893 289.5h125M1026 289.5h4" stroke="#5cb858" strokeWidth="1.3" />
        <OrderTag x={827} y={289.5} w={66} fill="#00f80c" fg="#053805" text="2s Sell LMT" />
        <Note x={867} y={401.5} w={46} fill="#0c0cd8" text="Target (39.03) ." />
        <path d="M913 406.5h101" stroke="#141c94" strokeWidth="1.9" strokeDasharray="9 4" />
        <path d="M912 455.5h104M912 469h104" stroke="#64a058" strokeWidth="1.6" strokeDasharray="8 4" />
        <Note x={890} y={451} w={22} fill="#20e028" fg="#0c5c10" text="8.80) ." />
        <Note x={890} y={463} w={22} h={11} fill="#3cc438" fg="#0c4c10" text="8.75) ." />
        <path
          d="M907 474v7M905 478h9M912 472v7M912 476h10M922 472v8M917 477h15M932 472v8M932 475h10M942 460v16M942 461h5M963 457v14M959 469h4M963 459h9M973 453v14M968 464h5M973 454h9M983 442v21M978 457h5M983 448h10M994 424v28M989 450h5M994 433h10M1004 420v16M999 434h5M1004 422h10M1014 413v15M1009 424h10"
          stroke="#1414e0"
          strokeWidth="3.6"
          fill="none"
        />
        <path d="M902 473v7M902 475h-5M902 478h4M948 462h5M953 462v9M953 468h5" stroke="#f01818" strokeWidth="3.6" />
        <path d="M890 457h127M890 468h127M1026 457h4M1026 468h4" stroke="#d82424" strokeWidth="1.3" />
        <path d="M1010 423h22" stroke="#1414c8" strokeWidth="2" />
        <OrderTag x={834} y={468} w={59} fill="#f80c10" text="1 Sell STP" />
        <OrderTag x={834} y={457} w={59} fill="#f80c10" text="1 Sell STP" />
        <Note x={856} y={491} w={42} fill="#f0a428" text="BUY Entry (38" />
        <Position x={895} y={496} w={69} text="$660.00" qty="2" />
        <path d="M976 496.5h54" stroke="#dca858" strokeWidth="1.2" />
        <PriceTag x={1028} y={250} w={40} fill="#b8a8f0" text="39.77" />
        <PriceTag x={1028} y={259} w={40} fill="#f8ccf4" text="39.70" />
        <PriceTag x={1028} y={296} w={40} fill="#f8ccf4" text="" />
        <PriceTag x={1028} y={278.5} w={40} fill="#c0bcf4" text="39.61" />
        <PriceTag x={1028} y={289.5} w={40} fill="#00f80c" fg="#053805" text="39.56" />
        <PriceTag x={1028} y={327} w={40} fill="#aca4f0" text="39.39" />
        <PriceTag x={1028} y={419.5} w={40} fill="#d4d0f8" text="" />
        <PriceTag x={1028} y={424} w={40} fill="#0808e0" text="38.95" />
        <PriceTag x={1028} y={446} w={40} fill="#c4c0f4" text="38.85" />
        <PriceTag x={1028} y={468} w={40} fill="#f80c10" text="38.75" />
        <PriceTag x={1028} y={457} w={40} fill="#f80c10" text="38.80" />
        <PriceTag x={1028} y={496.5} w={40} fill="#deb488" fg="#111" text="38.62" />
        <PriceTag x={1028} y={540.5} w={40} fill="#f8ccf4" text="38.42" />
        <PriceTag x={1028} y={571} w={40} fill="#c0b8f4" text="38.28" />
        <PriceTag x={1028} y={578} w={40} fill="#b890f0" text="38.25" />
        <PriceTag x={1028} y={591} w={40} fill="#f8ccf4" text="38.19" />
        <PanelFlag x={1057} y={251} />
      </ChartWindow>
    </main>
  );
}
